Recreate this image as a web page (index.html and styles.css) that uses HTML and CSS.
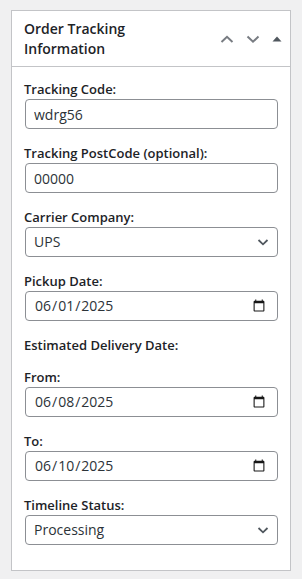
FILE: index.html
```html
<!DOCTYPE html>
<html lang="en">
<head>
    <meta charset="UTF-8">
    <meta name="viewport" content="width=device-width, initial-scale=1.0">
    <title>Order Tracking Information</title>
    <link rel="stylesheet" href="styles.css">
</head>
<body>
    <div class="postbox">
        <div class="postbox-header">
            <h2>Order Tracking Information</h2>
            <div class="handle-actions">
                <!-- move up -->
                <svg class="handle-icon" width="16" height="16" viewBox="0 0 16 16">
                    <path d="M2.5 11 L8 5.8 L13.5 11" fill="none" stroke="#787c82" stroke-width="2"/>
                </svg>
                <!-- move down -->
                <svg class="handle-icon" width="16" height="16" viewBox="0 0 16 16">
                    <path d="M2.5 5.5 L8 10.7 L13.5 5.5" fill="none" stroke="#787c82" stroke-width="2"/>
                </svg>
                <!-- toggle -->
                <svg class="handle-icon toggle" width="12" height="16" viewBox="0 0 12 16">
                    <path d="M1.5 10.5 L6 5.5 L10.5 10.5 Z" fill="#50575e"/>
                </svg>
            </div>
        </div>

        <div class="inside">
            <div class="field">
                <label for="tracking_code">Tracking Code:</label>
                <input type="text" id="tracking_code" value="wdrg56">
            </div>

            <div class="field">
                <label for="tracking_postcode">Tracking PostCode (optional):</label>
                <input type="text" id="tracking_postcode" value="00000">
            </div>

            <div class="field">
                <label for="carrier">Carrier Company:</label>
                <div class="select-wrap">
                    <select id="carrier">
                        <option>UPS</option>
                        <option>FedEx</option>
                        <option>DHL</option>
                        <option>USPS</option>
                    </select>
                    <svg class="select-arrow" width="16" height="16" viewBox="0 0 16 16">
                        <path d="M3.5 6 L8 10.3 L12.5 6" fill="none" stroke="#50575e" stroke-width="1.8"/>
                    </svg>
                </div>
            </div>

            <div class="field">
                <label for="pickup_date">Pickup Date:</label>
                <input type="date" id="pickup_date" value="2025-06-01">
            </div>

            <div class="group-title">Estimated Delivery Date:</div>

            <div class="field">
                <label for="delivery_from">From:</label>
                <input type="date" id="delivery_from" value="2025-06-08">
            </div>

            <div class="field">
                <label for="delivery_to">To:</label>
                <input type="date" id="delivery_to" value="2025-06-10">
            </div>

            <div class="field last">
                <label for="timeline_status">Timeline Status:</label>
                <div class="select-wrap">
                    <select id="timeline_status">
                        <option>Processing</option>
                        <option>Shipped</option>
                        <option>Delivered</option>
                    </select>
                    <svg class="select-arrow" width="16" height="16" viewBox="0 0 16 16">
                        <path d="M3.5 6 L8 10.3 L12.5 6" fill="none" stroke="#50575e" stroke-width="1.8"/>
                    </svg>
                </div>
            </div>
        </div>
    </div>
</body>
</html>
```

FILE: styles.css
```css
body {
    margin: 0;
    padding: 10px 11px 9px 11px;
    background-color: #f0f0f1;
    font-family: "Open Sans", "Noto Sans", sans-serif;
    font-size: 14px;
    color: #1d2327;
}

.postbox {
    background-color: #fff;
    border: 1px solid #c3c4c7;
}

.postbox-header {
    display: flex;
    align-items: center;
    justify-content: space-between;
    border-bottom: 1px solid #c3c4c7;
}

.postbox-header h2 {
    margin: 0;
    padding: 8px 12px;
    width: 130px;
    font-size: 14px;
    font-weight: 600;
    line-height: 1.4;
}

.handle-actions {
    display: flex;
    align-items: center;
    gap: 10px;
    padding-right: 7px;
    padding-top: 1px;
}

.handle-icon {
    display: block;
}

.inside {
    padding: 12px 13px 25px 12px;
}

.field {
    margin-bottom: 14px;
}

.field.last {
    margin-bottom: 0;
}

.field label,
.group-title {
    display: block;
    font-size: 13px;
    font-weight: 600;
    line-height: 20px;
}

.group-title {
    margin-top: 1px;
    margin-bottom: 12px;
}

.field input,
.field select {
    box-sizing: border-box;
    display: block;
    width: 100%;
    height: 30px;
    margin: 0 1px;
    padding: 0 8px;
    border: 1px solid #8c8f94;
    border-radius: 4px;
    background-color: #fff;
    font-family: inherit;
    font-size: 14px;
    color: #2c3338;
    line-height: 28px;
}

.field input[type="date"] {
    padding-right: 9px;
}

.field input[type="date"]::-webkit-calendar-picker-indicator {
    margin-left: 0;
    opacity: 0.9;
}

.select-wrap {
    position: relative;
}

.field select {
    appearance: none;
    -webkit-appearance: none;
    padding-right: 24px;
}

.select-arrow {
    position: absolute;
    right: 6px;
    top: 7px;
    pointer-events: none;
}
```
